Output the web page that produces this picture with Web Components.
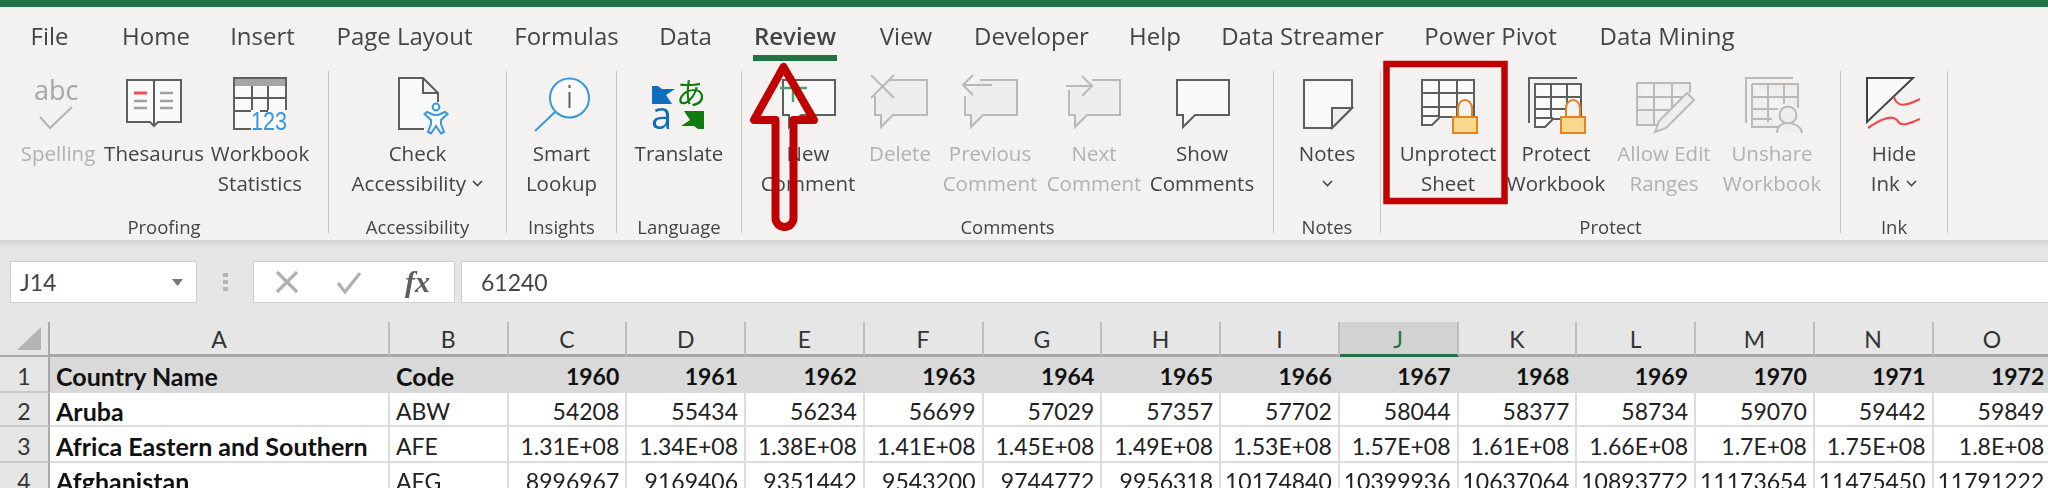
<!DOCTYPE html>
<html>
<head>
<meta charset="utf-8">
<title>Review ribbon</title>
<style>
  html, body { margin: 0; height: 488px; overflow: hidden; background: #e6e6e6; }
  body { position: relative; width: 2048px; }
</style>
</head>
<body>
<xl-ribbon>
  <xl-tabs></xl-tabs>
  <xl-group label="Proofing" pad="10">
    <xl-btn icon="spelling" w="96" off>Spelling</xl-btn>
    <xl-btn icon="thesaurus" w="96">Thesaurus</xl-btn>
    <xl-btn icon="stats" w="116">Workbook<br>Statistics</xl-btn>
  </xl-group>
  <xl-group label="Accessibility" width="178" center>
    <xl-btn icon="access" w="160">Check<br>Accessibility <xl-chev></xl-chev></xl-btn>
  </xl-group>
  <xl-group label="Insights" width="110" center>
    <xl-btn icon="lookup" w="100">Smart<br>Lookup</xl-btn>
  </xl-group>
  <xl-group label="Language" width="125" center>
    <xl-btn icon="translate" w="110">Translate</xl-btn>
  </xl-group>
  <xl-group label="Comments" width="532" pad="12">
    <xl-btn icon="newc" w="108">New<br>Comment</xl-btn>
    <xl-btn icon="delc" w="76" off>Delete</xl-btn>
    <xl-btn icon="prevc" w="104" off>Previous<br>Comment</xl-btn>
    <xl-btn icon="nextc" w="104" off>Next<br>Comment</xl-btn>
    <xl-btn icon="showc" w="112">Show<br>Comments</xl-btn>
  </xl-group>
  <xl-group label="Notes" width="107" center>
    <xl-btn icon="notes" w="90">Notes<br><xl-chev></xl-chev></xl-btn>
  </xl-group>
  <xl-group label="Protect" width="460" pad="9">
    <xl-btn icon="unprotect" w="116">Unprotect<br>Sheet</xl-btn>
    <xl-btn icon="protect" w="100">Protect<br>Workbook</xl-btn>
    <xl-btn icon="allow" w="116" off>Allow Edit<br>Ranges</xl-btn>
    <xl-btn icon="unshare" w="100" off>Unshare<br>Workbook</xl-btn>
  </xl-group>
  <xl-group label="Ink" width="107" center>
    <xl-btn icon="ink" w="90">Hide<br>Ink <xl-chev></xl-chev></xl-btn>
  </xl-group>
</xl-ribbon>
<xl-formula-bar></xl-formula-bar>
<xl-sheet></xl-sheet>
<xl-marks></xl-marks>

<script>
const INK = 'fill="none" stroke="#605e5c" stroke-width="2"'
const DIM = 'fill="none" stroke="#b9b9b9" stroke-width="2"'
const lock = x => `
  <path d="M${x + 5} 41V32a7 8 0 0 1 14 0v9" fill="#f3f2f1" stroke="#e8821e" stroke-width="2"/>
  <rect x="${x}" y="41" width="24" height="16" fill="#f8d98b" stroke="#e8821e" stroke-width="2"/>`
const bubble = (d, stroke, fill) => `<path d="${d}" fill="${fill}" stroke="${stroke}" stroke-width="2"/>`

const ICONS = {
  spelling: `<text x="6" y="24" font-family="Open Sans" font-size="27" fill="#a6a6a6">abc</text>
    <path d="M12 41l10 11 22-21" fill="none" stroke="#b4b4b4" stroke-width="2"/>`,
  thesaurus: `<path d="M3 4H29.5L30 6 30.5 4H57V46H34L30 50 26 46H3Z" fill="#fafafa" stroke="#605e5c" stroke-width="2"/>
    <path d="M30 6V50" ${INK}/>
    <path d="M10 17H23" stroke="#f1515a" stroke-width="3"/>
    <path d="M10 25H23M10 32H23M36 17H49M36 25H49M36 32H49" stroke="#a0a0a0" stroke-width="2.4"/>`,
  stats: `<rect x="4" y="2" width="52" height="51" fill="#fafafa"/>
    <rect x="4" y="2" width="52" height="8" fill="#a6a6a6"/>
    <path d="M56 34V2H4V53H21M22 10V34M38 10V34M4 22H56M4 35H21M38 35H30" ${INK}/>
    <text x="57" y="54" font-family="Liberation Sans" font-size="25" fill="#3a96dd" text-anchor="end" textLength="36" lengthAdjust="spacingAndGlyphs">123</text>`,
  access: `<path d="M36 53H11V2H35L50 17V26M35 2V17H50" fill="#fafafa" stroke="#605e5c" stroke-width="2"/>
    <circle cx="48" cy="31" r="3.4" fill="#fafafa" stroke="#3a96dd" stroke-width="2"/>
    <path d="M36.5 38L39 36 46 39H50L57 36 59.5 38 53 44V48L56 56 53 57.5 48 50 43 57.5 40 56 43 48V44Z" fill="#fafafa" stroke="#3a96dd" stroke-width="2"/>`,
  lookup: `<circle cx="37.5" cy="22" r="19.5" fill="#fafafa" stroke="#3a96dd" stroke-width="2"/>
    <path d="M23 36L3 55" stroke="#3a96dd" stroke-width="2"/>
    <path d="M37.5 16V32M37.5 9V12" stroke="#605e5c" stroke-width="2"/>`,
  translate: `<path d="M3 10H9L13 13H26L17 19 23 28H3Z" fill="#106ebe"/>
    <text x="2" y="53" font-family="Open Sans" font-size="38" fill="#106ebe">a</text>
    <text x="27" y="28" font-family="Noto Sans CJK JP, sans-serif" font-size="30" fill="#107c10">あ</text>
    <path d="M55 53H49L45 50H32L41 44 35 35H55Z" fill="#107c10"/>`,
  newc: bubble('M5 4H57V39H23L11 51V39H5Z', '#605e5c', '#fafafa') + `<path d="M2 12H29M15 0V26" stroke="#41a85f" stroke-width="2.4"/>`,
  delc: bubble('M20 4H57V39H23L11 51V39H5V20', '#b9b9b9', '#eeeeee') + `<path d="M1 -1L24 22M24 -1L1 22" ${DIM}/>`,
  prevc: bubble('M20 4H57V39H23L11 51V39H5V20', '#b9b9b9', '#eeeeee') + `<path d="M32 9H3M13 -1L3 9 13 19" ${DIM}/>`,
  nextc: bubble('M28 4H56V39H23L11 51V39H5V14', '#b9b9b9', '#eeeeee') + `<path d="M2 10H28M18 0L28 10 18 20" ${DIM}/>`,
  showc: bubble('M5 4H57V39H23L11 51V39H5Z', '#605e5c', '#fafafa'),
  notes: `<path d="M7 4H55V32L35 52H7Z" fill="#fafafa" stroke="#605e5c" stroke-width="2"/>
    <path d="M55 32H35V52Z" fill="#eeeeee" stroke="#605e5c" stroke-width="2"/>`,
  unprotect: `<path d="M4 4H56V41H22L14 49H4Z" fill="#fafafa" stroke="#605e5c" stroke-width="2"/>
    <path d="M21 4V41M39 4V41M4 17H56M4 31H56M4 40H22" ${INK}/>` + lock(35),
  protect: `<path d="M51 2H3V47" ${INK}/>
    <path d="M9 8H55V43H27L19 51H9Z" fill="#fafafa" stroke="#605e5c" stroke-width="2"/>
    <path d="M25 8V43M41 8V43M9 21H55M9 33H55M9 42H27" ${INK}/>` + lock(35),
  allow: `<path d="M3 7H56V17M3 7V49H28" fill="#eeeeee" stroke="#b9b9b9" stroke-width="2"/>
    <path d="M20 7V49M38 7V40M3 21H50M3 34H40" ${DIM}/>
    <path d="M21 56L25 45 53 17 60 24 32 52Z" fill="#eeeeee" stroke="#b9b9b9" stroke-width="2"/>`,
  unshare: `<path d="M51 2H4V47" ${DIM}/>
    <path d="M10 8H56V32M36 51H10V8" fill="#eeeeee" stroke="#b9b9b9" stroke-width="2"/>
    <path d="M26 8V46M42 8V28M10 21H56M10 33H36M10 43H30" ${DIM}/>
    <circle cx="46" cy="39" r="8.5" fill="#eeeeee" stroke="#b9b9b9" stroke-width="2"/>
    <path d="M35 57C35 50 40 47 46 47S59 50 60 57" fill="#eeeeee" stroke="#b9b9b9" stroke-width="2"/>`,
  ink: `<path d="M3 2H49L3 46Z" fill="#fafafa" stroke="#444" stroke-width="2"/>
    <path d="M30 21C33 31 40 31 56 23M4 52C18 42 28 39 33 44 37 52 47 47 56 43" fill="none" stroke="#f04a50" stroke-width="2.2"/>`
}

class XlRibbon extends HTMLElement {
  connectedCallback() {
    this.attachShadow({ mode: 'open' }).innerHTML = `
      <style>
        :host {
          display: block;
          height: 240px;
          background: #f3f2f1;
          border-top: 7px solid #217346;
          box-sizing: border-box;
          font-family: "Open Sans", sans-serif;
          color: #444;
          filter: blur(.5px);
        }
        .groups { display: flex; height: 162px; }
      </style>
      <slot name="tabs"></slot>
      <div class="groups"><slot></slot></div>`
    this.querySelector('xl-tabs').slot = 'tabs'
  }
}

class XlTabs extends HTMLElement {
  connectedCallback() {
    const tabs = [['File', 37], ['Home', 66], ['Insert', 63], ['Page Layout', 137], ['Formulas', 103], ['Data', 51], ['Review', 84], ['View', 54], ['Developer', 113], ['Help', 50], ['Data Streamer', 161], ['Power Pivot', 131], ['Data Mining', 138]]
    this.attachShadow({ mode: 'open' }).innerHTML = `
      <style>
        :host {
          display: flex;
          gap: 42px;
          height: 64px;
          padding: 14px 0 0 31px;
          box-sizing: border-box;
          font-size: 24px;
          line-height: 30px;
        }
        span { flex: none; height: 34px; white-space: nowrap; display: flex; justify-content: center; }
        span:first-of-type { margin-right: 13px; }
        .on { font-weight: 600; border-bottom: 6px solid #217346; }
      </style>
      ${tabs.map(([n, w]) => `<span class="${n === 'Review' ? 'on' : ''}" style="width:${w}px">${n}</span>`).join('')}`
  }
}

class XlGroup extends HTMLElement {
  connectedCallback() {
    const width = this.getAttribute('width') || 329
    const center = this.hasAttribute('center')
    const pad = this.getAttribute('pad') || 0
    this.attachShadow({ mode: 'open' }).innerHTML = `
      <style>
        :host {
          display: flex;
          flex-direction: column;
          flex: none;
          box-sizing: border-box;
          width: ${width}px;
          border-right: 1px solid #c8c6c4;
        }
        .row {
          flex: 1;
          display: flex;
          padding-left: ${pad}px;
          justify-content: ${center ? 'center' : 'flex-start'};
        }
        .label {
          height: 24px;
          line-height: 24px;
          margin-bottom: -6px;
          font-size: 18.5px;
          text-align: center;
          white-space: nowrap;
        }
      </style>
      <div class="row"><slot></slot></div>
      <div class="label">${this.getAttribute('label')}</div>`
  }
}

class XlBtn extends HTMLElement {
  connectedCallback() {
    const off = this.hasAttribute('off')
    this.attachShadow({ mode: 'open' }).innerHTML = `
      <style>
        :host {
          display: flex;
          flex-direction: column;
          align-items: center;
          flex: none;
          width: ${this.getAttribute('w')}px;
          padding-top: 5px;
          font-size: 20.5px;
          line-height: 30px;
          color: ${off ? '#b1b1b1' : '#444'};
        }
        svg { display: block; overflow: visible; margin-bottom: 6px; }
        .text { white-space: nowrap; text-align: center; }
      </style>
      <svg width="60" height="56" viewBox="0 0 60 56">${ICONS[this.getAttribute('icon')]}</svg>
      <div class="text"><slot></slot></div>`
  }
}

class XlChev extends HTMLElement {
  connectedCallback() {
    this.attachShadow({ mode: 'open' }).innerHTML = `
      <style>:host { display: inline-block; }</style>
      <svg width="11" height="7" viewBox="0 0 11 7" style="display:block;margin:0 0 4px 1px"><path d="M1 1l4.5 4.5L10 1" fill="none" stroke="#444" stroke-width="1.6"/></svg>`
  }
}

class XlFormulaBar extends HTMLElement {
  connectedCallback() {
    this.attachShadow({ mode: 'open' }).innerHTML = `
      <style>
        :host {
          display: flex;
          align-items: center;
          height: 82px;
          box-sizing: border-box;
          padding: 21px 0 19px 10px;
          background: linear-gradient(#d2d2d2, #e6e6e6 8px);
          font-family: Lato, sans-serif;
          font-size: 23px;
          color: #444;
          filter: blur(.5px);
        }
        .box {
          display: flex;
          align-items: center;
          box-sizing: border-box;
          height: 42px;
          background: #fff;
          border: 1px solid #d0d0d0;
        }
        .name { width: 187px; padding-left: 9px; justify-content: space-between; padding-right: 13px; }
        .grip { width: 56px; display: flex; justify-content: center; }
        .tools { width: 202px; justify-content: space-between; padding: 0 24px; color: #605e5c; }
        .fx { font: italic bold 30px "Liberation Serif", serif; color: #605e5c; }
        .input { flex: 1; margin-left: 6px; padding-left: 19px; margin-right: -6px; }
      </style>
      <div class="box name"><span>J14</span><svg width="11" height="7"><path d="M0 0H11L5.5 7Z" fill="#777"/></svg></div>
      <div class="grip"><svg width="5" height="20"><path d="M0 1h5v4H0zM0 8h5v4H0zM0 15h5v4H0z" fill="#b4b4b4"/></svg></div>
      <div class="box tools">
        <svg width="24" height="24" style="margin-left:-3px"><path d="M2 2L22 22M22 2L2 22" stroke="#b0b0b0" stroke-width="3.2" fill="none"/></svg>
        <svg width="26" height="24" style="margin-left:14px"><path d="M2 13L9 22 24 3" stroke="#b0b0b0" stroke-width="3.2" fill="none"/></svg>
        <span class="fx" style="margin-left:20px">fx</span>
      </div>
      <div class="box input">61240</div>`
  }
}

class XlSheet extends HTMLElement {
  connectedCallback() {
    const cols = 'ABCDEFGHIJKLMNO'.split('')
    const rows = [
      ['Country Name', 'Code', ...Array.from({ length: 13 }, (_, i) => 1960 + i)],
      ['Aruba', 'ABW', 54208, 55434, 56234, 56699, 57029, 57357, 57702, 58044, 58377, 58734, 59070, 59442, 59849],
      ['Africa Eastern and Southern', 'AFE', '1.31E+08', '1.34E+08', '1.38E+08', '1.41E+08', '1.45E+08', '1.49E+08', '1.53E+08', '1.57E+08', '1.61E+08', '1.66E+08', '1.7E+08', '1.75E+08', '1.8E+08'],
      ['Afghanistan', 'AFG', 8996967, 9169406, 9351442, 9543200, 9744772, 9956318, 10174840, 10399936, 10637064, 10893772, 11173654, 11475450, 11791222]
    ]
    let html = `<div class="corner"><svg width="26" height="24"><path d="M24 1V24H0Z" fill="#b4b4b4"/></svg></div>`
    html += cols.map(c => `<div class="colhead ${c === 'J' ? 'sel' : ''}">${c}</div>`).join('')
    rows.forEach((row, r) => {
      html += `<div class="rowhead">${r + 1}</div>`
      row.forEach((v, c) => {
        const cls = [r === 0 ? 'top' : '', c === 0 || r === 0 ? 'b' : '', c > 1 ? 'num' : 'txt'].join(' ')
        html += `<div class="cell ${cls}">${v}</div>`
      })
    })
    this.attachShadow({ mode: 'open' }).innerHTML = `
      <style>
        :host {
          display: grid;
          grid-template-columns: 50px 340px 118.5px repeat(13, 118.75px);
          grid-template-rows: 35px 36px 34px 36px 35px;
          width: 2060px;
          height: 166px;
          background: #fff;
          font-family: Lato, sans-serif;
          font-size: 23px;
          color: #222;
          filter: blur(.5px);
        }
        div { box-sizing: border-box; display: flex; align-items: center; white-space: nowrap; overflow: hidden; }
        .corner { background: #e6e6e6; justify-content: flex-end; align-items: flex-end; padding: 0 5px 5px 0; border-right: 2px solid #a8a8a8; border-bottom: 2px solid #a8a8a8; }
        .colhead { background: #e6e6e6; justify-content: center; color: #333; padding-top: 2px; border-right: 2px solid #bdbdbd; border-bottom: 3px solid #a8a8a8; }
        .colhead.sel { background: #d2d2d2; color: #217346; border-bottom: 3px solid #217346; }
        .rowhead { background: #e6e6e6; justify-content: center; color: #333; padding-top: 3px; border-right: 2px solid #a8a8a8; border-bottom: 2px solid #c8c8c8; }
        .cell { padding: 3px 6px 0; border-right: 2px solid #dcdcdc; border-bottom: 2px solid #dcdcdc; color: #222; }
        .top { background: #d9d9d9; border-color: #d9d9d9; }
        .b { font-weight: 700; color: #111; }
        .txt.b { font-size: 25px; }
        .num { justify-content: flex-end; }
      </style>
      ${html}`
  }
}

class XlMarks extends HTMLElement {
  connectedCallback() {
    this.attachShadow({ mode: 'open' }).innerHTML = `
      <style>:host { position: absolute; top: 0; left: 0; width: 2048px; height: 488px; pointer-events: none; }</style>
      <svg width="2048" height="488" fill="none" stroke="#c00000">
        <rect x="1386.5" y="64" width="118" height="137" stroke-width="6.5"/>
        <path d="M783.5 67L754 120H775.5V218A9 9 0 0 0 793.5 218V120H814Z" stroke-width="8" stroke-linejoin="round"/>
      </svg>`
  }
}

customElements.define('xl-ribbon', XlRibbon)
customElements.define('xl-tabs', XlTabs)
customElements.define('xl-group', XlGroup)
customElements.define('xl-btn', XlBtn)
customElements.define('xl-chev', XlChev)
customElements.define('xl-formula-bar', XlFormulaBar)
customElements.define('xl-sheet', XlSheet)
customElements.define('xl-marks', XlMarks)
</script>
</body>
</html>
